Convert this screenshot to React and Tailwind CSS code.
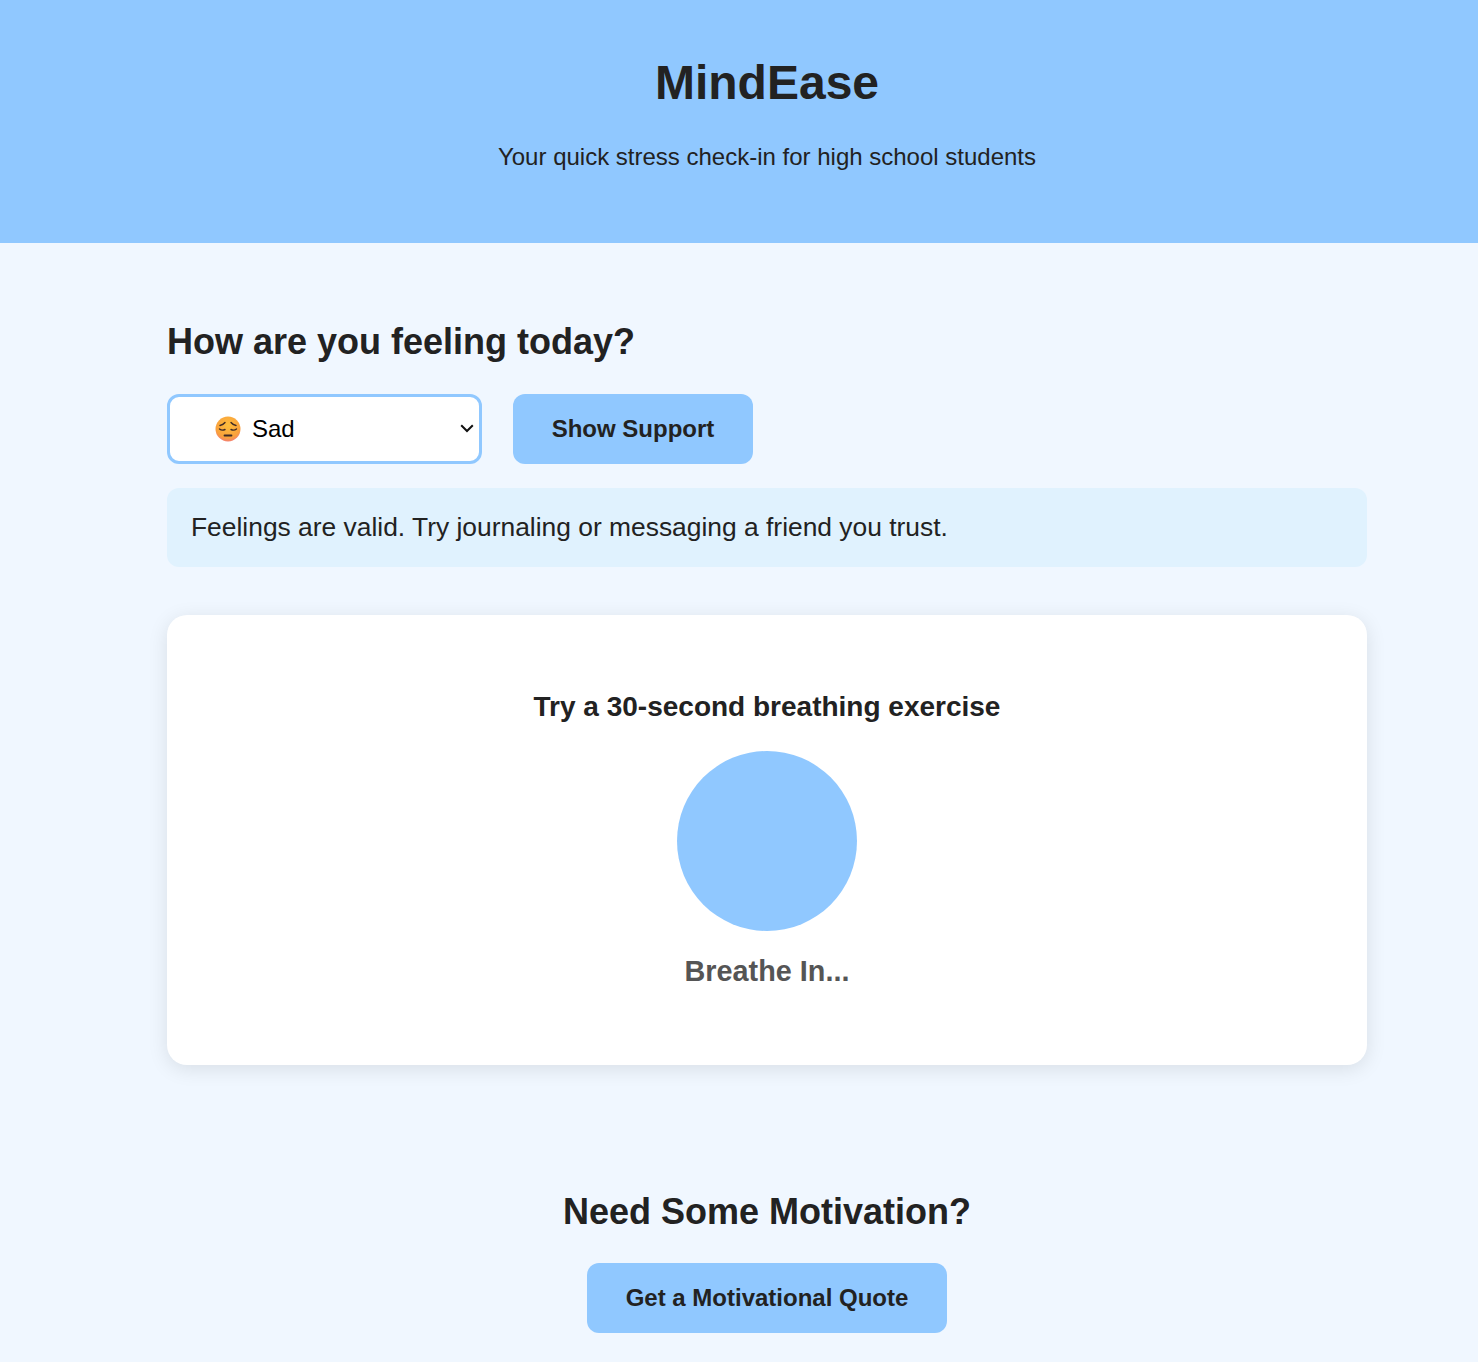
import { useState } from 'react';

const messages = {
  happy: "That's great! Keep doing what makes you smile.",
  stressed: 'Take a slow breath. One thing at a time.',
  sad: 'Feelings are valid. Try journaling or messaging a friend you trust.',
};

// select's own arrow and the system emoji look different here, so both are drawn
const SadFace = () => (
  <svg viewBox="0 0 26 26" className="h-[26px] w-[26px]">
    <defs>
      <radialGradient id="face" cx="50%" cy="35%" r="72%">
        <stop offset="0%" stopColor="#fdbe3c" />
        <stop offset="70%" stopColor="#f9a03c" />
        <stop offset="100%" stopColor="#f2708a" />
      </radialGradient>
    </defs>
    <circle cx="13" cy="13" r="12.5" fill="url(#face)" />
    <g fill="none" stroke="#3f2a26" strokeWidth="1.4" strokeLinecap="round">
      <path d="M5 9.5 Q8 9 10 6.5" />
      <path d="M21 9.5 Q18 9 16 6.5" />
      <path d="M4.5 13 Q7 15 10 13.5" />
      <path d="M16 13.5 Q19 15 21.5 13" />
      <path d="M9.5 19.5 H16.5" strokeWidth="1.8" />
    </g>
  </svg>
);

export default function App() {
  const [mood, setMood] = useState('sad');

  return (
    <div className="min-h-[1362px] bg-[#f0f7ff] font-['Liberation_Sans',Arial,sans-serif] text-[#222222]">
      {/* Header */}
      <header className="h-[243px] bg-[#90c8ff] pt-[48px] pl-[56px] text-center">
        <h1 className="text-[48px] leading-[70px] font-bold">MindEase</h1>
        <p className="mt-[21px] text-[24px] leading-[35px]">
          Your quick stress check-in for high school students
        </p>
      </header>

      <main className="ml-[167px] w-[1200px]">
        {/* Mood */}
        <section className="pt-[73px]">
          <h2 className="text-[36px] leading-[52px] font-bold">How are you feeling today?</h2>
          <div className="mt-[26px] flex items-center gap-[31px]">
            <div className="relative h-[70px] w-[315px]">
              <select
                value={mood}
                onChange={(e) => setMood(e.target.value)}
                className="h-full w-full appearance-none rounded-[12px] border-[3px] border-[#90c8ff] bg-white pl-[82px] text-[24px] text-black"
              >
                <option value="happy">Happy</option>
                <option value="stressed">Stressed</option>
                <option value="sad">Sad</option>
              </select>
              <span className="pointer-events-none absolute top-[22px] left-[48px]">
                <SadFace />
              </span>
              <svg
                viewBox="0 0 14 9"
                className="pointer-events-none absolute top-[30px] left-[293px] h-[9px] w-[14px]"
              >
                <path d="M1.2 1.2 L7 7 L12.8 1.2" fill="none" stroke="#111111" strokeWidth="2" />
              </svg>
            </div>
            <button className="h-[70px] w-[240px] rounded-[12px] bg-[#90c8ff] text-[24px] font-bold text-[#222222]">
              Show Support
            </button>
          </div>
          <div className="mt-[24px] h-[79px] rounded-[12px] bg-[#e0f2fe] px-[24px] text-[26.4px] leading-[79px]">
            {messages[mood]}
          </div>
        </section>

        {/* Breathing */}
        <section className="mt-[48px] flex h-[450px] flex-col items-center rounded-[20px] bg-white pt-[72px] shadow-[0_4px_20px_rgba(0,0,0,0.1)]">
          <h3 className="text-[28px] leading-[40px] font-bold">Try a 30-second breathing exercise</h3>
          <div className="mt-[24px] h-[180px] w-[180px] rounded-full bg-[#90c8ff]" />
          <p className="mt-[20px] text-[28.8px] leading-[40px] font-bold text-[#555555]">Breathe In...</p>
        </section>

        {/* Motivation */}
        <section className="mt-[121px] flex flex-col items-center">
          <h2 className="text-[36px] leading-[52px] font-bold">Need Some Motivation?</h2>
          <button className="mt-[25px] h-[70px] w-[360px] rounded-[12px] bg-[#90c8ff] text-[24px] font-bold text-[#222222]">
            Get a Motivational Quote
          </button>
        </section>
      </main>
    </div>
  );
}
